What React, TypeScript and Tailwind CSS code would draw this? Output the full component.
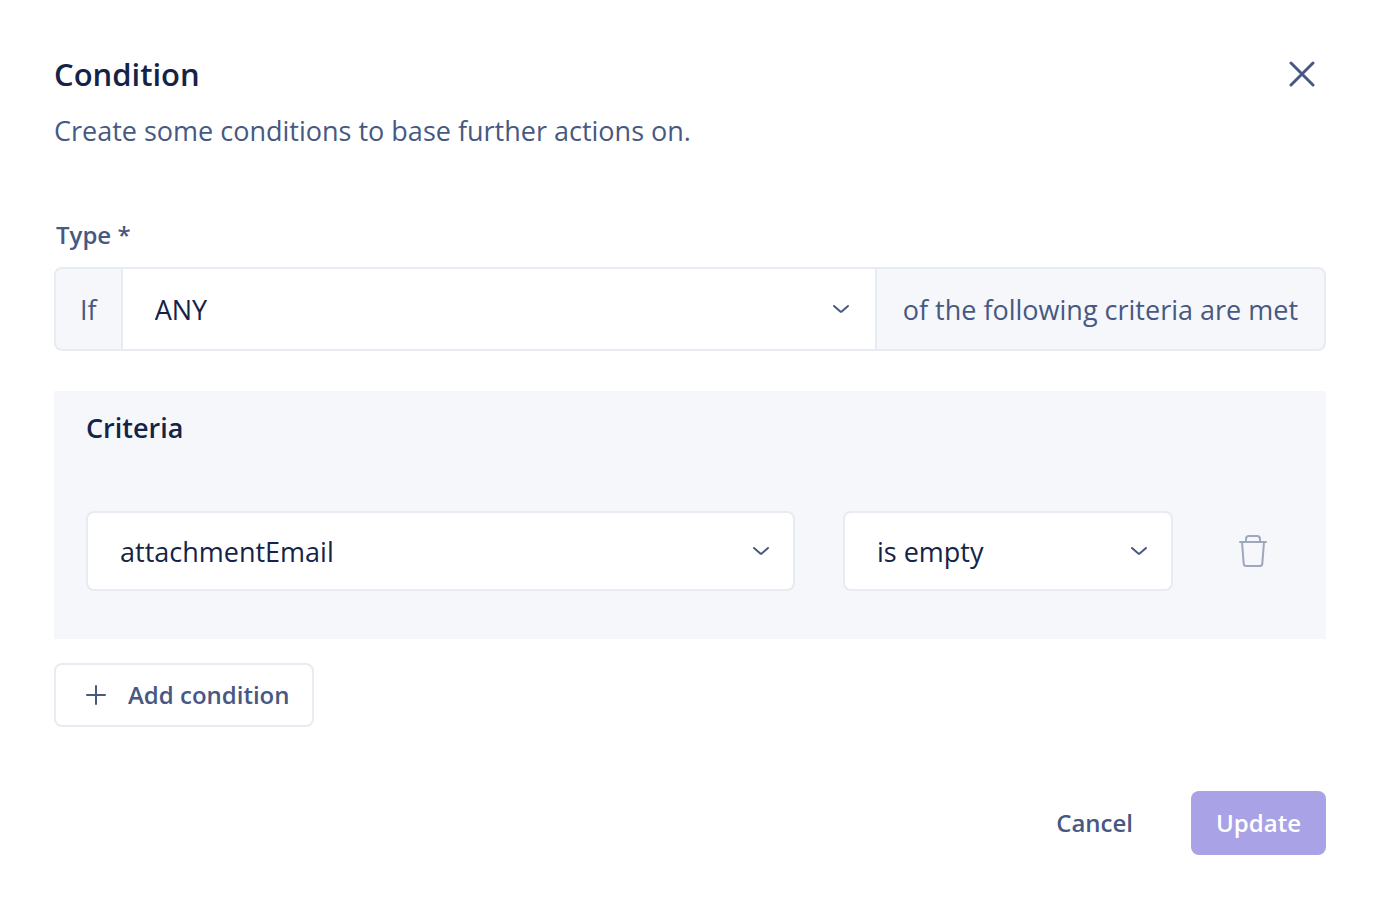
import React, { useState } from 'react';
import clsx from 'clsx';

type SelectProps = {
  label: string;
  id?: string;
  value: string;
  options: string[];
  onChange: (value: string) => void;
  className?: string;
  selectClassName?: string;
};

function ChevronIcon() {
  return (
    <svg
      width="20"
      height="12"
      viewBox="0 0 20 12"
      fill="none"
      stroke="#475982"
      strokeWidth="2"
      strokeLinecap="round"
      strokeLinejoin="round"
      className="pointer-events-none absolute right-6 top-1/2 -translate-y-1/2"
      aria-hidden="true"
    >
      <path d="M3 3l6.300 5.500c.4.350 1 .350 1.400 0L17 3" />
    </svg>
  );
}

function TrashIcon() {
  return (
    <svg
      width="28"
      height="36"
      viewBox="0 0 28 36"
      fill="none"
      stroke="#9fa7bd"
      strokeWidth="2"
      strokeLinecap="round"
      strokeLinejoin="round"
      aria-hidden="true"
    >
      <path d="M1 9h26" />
      <path d="M7 9V6a3 3 0 0 1 3-3h8a3 3 0 0 1 3 3v3" />
      <path d="M3 9l1.700 21.600A2.400 2.400 0 0 0 7 33h14a2.400 2.400 0 0 0 2.300-2.400L25 9" />
    </svg>
  );
}

function Select({ label, id, value, options, onChange, className, selectClassName }: SelectProps) {
  return (
    <div className={clsx('relative', className)}>
      <select
        id={id}
        aria-label={id ? undefined : label}
        value={value}
        onChange={(e) => onChange(e.target.value)}
        className={clsx(
          'h-20 w-full appearance-none bg-white pl-8 pr-14 pt-0.5 text-[27px] text-[#152347] outline-none',
          selectClassName,
        )}
      >
        {options.map((o) => (
          <option key={o}>{o}</option>
        ))}
      </select>
      <ChevronIcon />
    </div>
  );
}

export default function App() {
  const [match, setMatch] = useState('ANY');
  const [field, setField] = useState('attachmentEmail');
  const [operator, setOperator] = useState('is empty');

  return (
    <form
      className="min-h-screen bg-white pb-12 pl-[54px] pr-[58px] pt-[50px] font-['Open_Sans',sans-serif] text-[#475982]"
      onSubmit={(e) => e.preventDefault()}
    >
      <header className="flex items-start justify-between">
        <div>
          <h1 className="text-[31px] font-semibold leading-[48px] text-[#152347]">Condition</h1>
          <p className="mt-[13px] text-[27px] leading-10">Create some conditions to base further actions on.</p>
        </div>
        <button type="button" aria-label="Close" className="flex size-12 items-center justify-center">
          <svg
            width="26"
            height="26"
            viewBox="0 0 26 26"
            fill="none"
            stroke="currentColor"
            strokeWidth="3"
            strokeLinecap="round"
            aria-hidden="true"
          >
            <path d="M2 2l22 22M24 2L2 24" />
          </svg>
        </button>
      </header>

      <label htmlFor="match-type" className="ml-0.5 mt-[68px] block text-2xl font-semibold">
        Type *
      </label>
      <div className="mt-4 flex overflow-hidden rounded-lg border-2 border-[#e7ebf2] bg-[#f5f7fb] text-[27px]">
        <span className="flex items-center px-6 pt-0.5">If</span>
        <Select
          id="match-type"
          label="Type"
          value={match}
          options={['ANY', 'ALL']}
          onChange={setMatch}
          className="grow border-x-2 border-[#e7ebf2]"
        />
        <span className="flex items-center px-[26px] pt-0.5">of the following criteria are met</span>
      </div>

      <section className="mt-10 bg-[#f5f7fb] pb-12 pl-8 pr-[41px] pt-[17px]">
        <h2 className="text-[27px] font-semibold leading-10 text-[#152347]">Criteria</h2>
        <div className="mt-[63px] flex items-center gap-12">
          <Select
            label="Field"
            value={field}
            options={['attachmentEmail', 'subject', 'sender']}
            onChange={setField}
            className="grow"
            selectClassName="rounded-lg border-2 border-[#e7ebf2]"
          />
          <Select
            label="Operator"
            value={operator}
            options={['is empty', 'is not empty']}
            onChange={setOperator}
            className="w-[330px]"
            selectClassName="rounded-lg border-2 border-[#e7ebf2]"
          />
          <button type="button" aria-label="Delete condition" className="flex size-16 items-center justify-center">
            <TrashIcon />
          </button>
        </div>
      </section>

      <button
        type="button"
        className="mt-6 flex h-16 items-center gap-[22px] rounded-lg border-2 border-[#e7ebf2] pl-[30px] pr-[22px] text-2xl font-semibold"
      >
        <svg
          width="20"
          height="20"
          viewBox="0 0 20 20"
          fill="none"
          stroke="currentColor"
          strokeWidth="2"
          strokeLinecap="round"
          aria-hidden="true"
        >
          <path d="M10 1v18M1 10h18" />
        </svg>
        Add condition
      </button>

      <footer className="mt-16 flex justify-end gap-8 text-2xl font-semibold">
        <button type="button" className="h-16 px-[26px]">
          Cancel
        </button>
        <button type="submit" className="h-16 rounded-lg bg-[#a9a2e6] px-[25px] text-white">
          Update
        </button>
      </footer>
    </form>
  );
}
